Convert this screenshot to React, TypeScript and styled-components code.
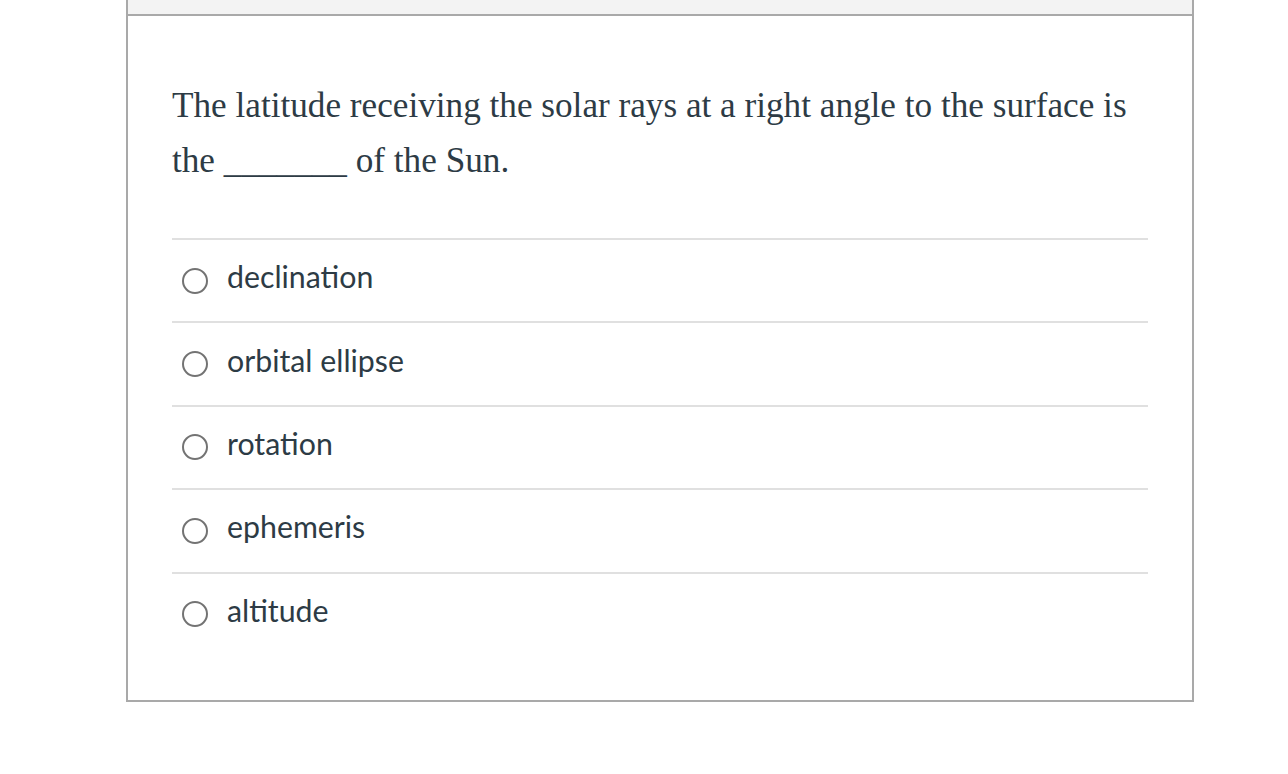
import React from "react";
import styled, { createGlobalStyle } from "styled-components";

const Global = createGlobalStyle`
  html, body { margin: 0; padding: 0; background: #ffffff; }
`;

const Page = styled.div`
  padding: 0 94px 0 126px;
  width: 1288px;
  box-sizing: border-box;
`;

const Card = styled.div`
  width: 1068px;
  box-sizing: border-box;
  border: 2px solid #a9a9a9;
  border-top: none;
  background: #fff;
`;

const Header = styled.div`
  height: 14px;
  background: #f3f3f3;
  border-bottom: 2px solid #a9a9a9;
`;

const Body = styled.div`
  padding: 62px 44px 0 44px;
  height: 684px;
  box-sizing: border-box;
`;

const Question = styled.div`
  font-family: "Liberation Serif", "Times New Roman", serif;
  font-size: 35.2px;
  line-height: 55px;
  color: #2d3b45;
  margin-bottom: 50px;
`;

const Answers = styled.div`
  display: flex;
  flex-direction: column;
`;

const Answer = styled.label`
  display: flex;
  align-items: center;
  gap: 19px;
  height: 81.4px;
  border-top: 2px solid #e0e0e0;
  padding-left: 10px;
  box-sizing: content-box;
  font-family: Lato, "Open Sans", sans-serif;
  font-size: 30.3px;
  color: #2d3b45;
`;

const Radio = styled.span`
  width: 22px;
  height: 22px;
  border-radius: 50%;
  border: 2px solid #737373;
  flex: none;
`;

const Label = styled.span`
  margin-top: -9px;
`;

const options = ["declination", "orbital ellipse", "rotation", "ephemeris", "altitude"];

export default function App() {
  return (
    <>
      <Global />
      <Page>
        <Card>
          <Header />
          <Body>
            <Question>
              The latitude receiving the solar rays at a right angle to the surface is the _______ of the Sun.
            </Question>
            <Answers>
              {options.map((o) => (
                <Answer key={o}>
                  <Radio />
                  <Label>{o}</Label>
                </Answer>
              ))}
            </Answers>
          </Body>
        </Card>
      </Page>
    </>
  );
}
